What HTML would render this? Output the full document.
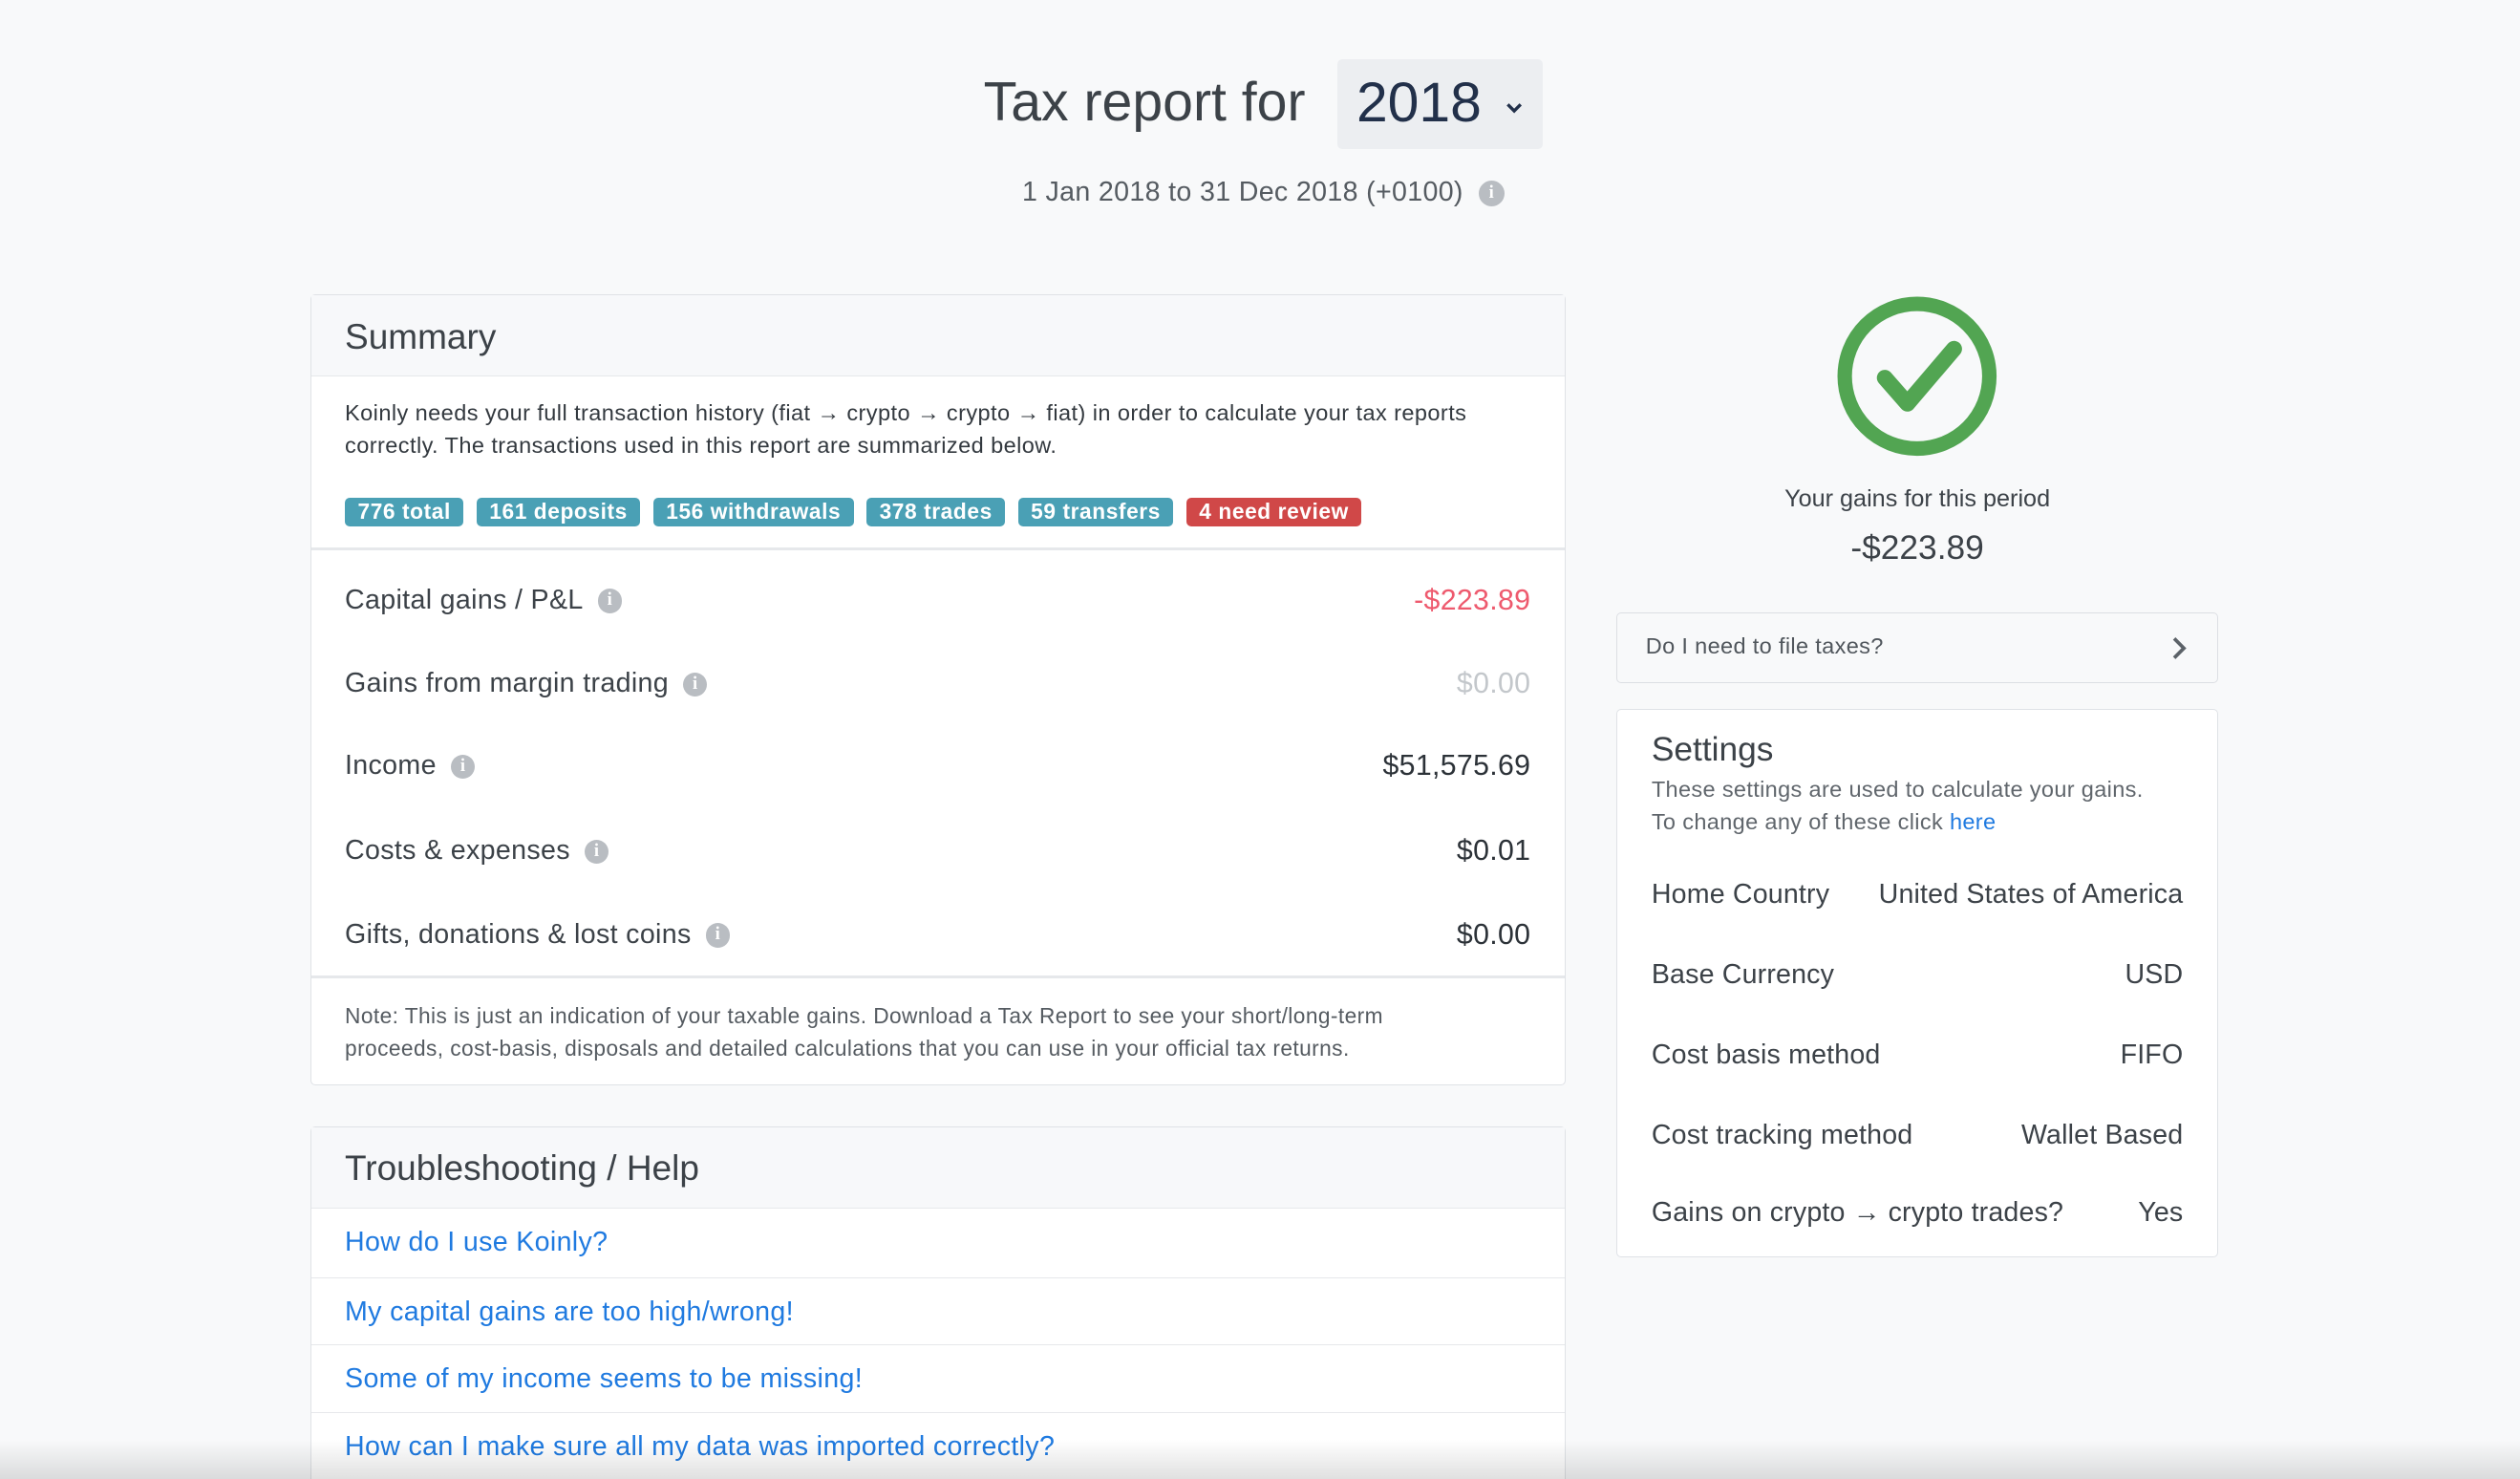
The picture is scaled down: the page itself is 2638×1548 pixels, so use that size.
<!DOCTYPE html>
<html style="overflow:hidden;height:1548px"><head><meta charset="utf-8"><style>
html,body{margin:0;padding:0}
body{width:1568px;height:920px;zoom:1.68240;background:#f8f9fa;font-family:"Liberation Sans",sans-serif;color:#3c4248;position:relative;overflow:hidden}
.a{position:absolute;white-space:nowrap}
.card{position:absolute;background:#fff;border:1px solid #dfe2e6;border-radius:3px;box-sizing:border-box}
.hd{position:absolute;left:0;right:0;top:0;background:#f7f8fa;border-bottom:1px solid #e6e8eb}
.i{display:inline-block;width:15px;height:15px;border-radius:50%;background:#b9bdc2;color:#fff;font-size:11px;font-weight:bold;text-align:center;line-height:15px;font-family:"Liberation Serif",serif;vertical-align:2px;margin-left:9px}
.b{display:inline-block;background:#4aa0b5;color:#fff;font-size:13.5px;font-weight:bold;padding:2px 8px;border-radius:3px;margin-right:8px;line-height:14px;letter-spacing:.35px}
.row{position:absolute;left:21px;right:21px;font-size:17px;letter-spacing:.2px}
.row .v{position:absolute;right:0;top:0}
.lk{position:absolute;left:0;right:0;height:42px;border-top:1px solid #e6e8eb;font-size:17px;color:#1f7ae0;padding-left:21px;line-height:42px;box-sizing:border-box;letter-spacing:.2px}
.sr{position:absolute;left:21px;right:21px;font-size:17px;letter-spacing:.1px}
.sr span{position:absolute;right:0}
</style></head><body>
<div class="a" style="left:612px;top:44px;font-size:34px;color:#3c4248">Tax report for</div>
<div class="a" style="left:832px;top:37px;width:128px;height:56px;background:#eceef1;border-radius:3px"></div>
<div class="a" style="left:844px;top:44px;font-size:35px;color:#22304a">2018</div>
<svg class="a" style="left:936px;top:63px" width="12" height="9" viewBox="0 0 12 9"><path d="M2 2l4 4 4-4" stroke="#22304a" stroke-width="2" fill="none"/></svg>
<div class="a" style="left:636px;top:110px;font-size:17px;color:#555b61;letter-spacing:.2px">1 Jan 2018 to 31 Dec 2018 (+0100)</div>
<div class="a" style="left:911px;top:111px"><span class="i" style="width:16px;height:16px;line-height:16px">i</span></div>

<div class="card" style="left:193px;top:183px;width:781px;height:492px">
 <div class="hd" style="height:50px"></div>
 <div class="a" style="left:21px;top:13px;font-size:22px">Summary</div>
 <div class="a" style="left:21px;top:63px;font-size:14px;line-height:20.5px;white-space:normal;width:730px;color:#33393f;letter-spacing:.25px">Koinly needs your full transaction history (fiat → crypto → crypto → fiat) in order to calculate your tax reports correctly. The transactions used in this report are summarized below.</div>
 <div class="a" style="left:21px;top:125px"><span class="b">776 total</span><span class="b">161 deposits</span><span class="b">156 withdrawals</span><span class="b">378 trades</span><span class="b">59 transfers</span><span class="b" style="background:#d04848">4 need review</span></div>
 <div class="a" style="left:0;right:0;top:157px;border-top:2px solid #e6e8eb"></div>
 <div class="row" style="top:180px">Capital gains / P&amp;L<span class="i">i</span><span class="v" style="color:#ee5a6e;font-size:18px">-$223.89</span></div>
 <div class="row" style="top:232px">Gains from margin trading<span class="i">i</span><span class="v" style="color:#c3c7cb;font-size:18px">$0.00</span></div>
 <div class="row" style="top:283px">Income<span class="i">i</span><span class="v" style="font-size:18px;color:#2c3238">$51,575.69</span></div>
 <div class="row" style="top:336px">Costs &amp; expenses<span class="i">i</span><span class="v" style="font-size:18px;color:#2c3238">$0.01</span></div>
 <div class="row" style="top:388px">Gifts, donations &amp; lost coins<span class="i">i</span><span class="v" style="font-size:18px;color:#2c3238">$0.00</span></div>
 <div class="a" style="left:0;right:0;top:423px;border-top:2px solid #e6e8eb"></div>
 <div class="a" style="left:21px;top:438px;font-size:13.5px;line-height:20.5px;white-space:normal;width:700px;color:#555b61;letter-spacing:.25px">Note: This is just an indication of your taxable gains. Download a Tax Report to see your short/long-term proceeds, cost-basis, disposals and detailed calculations that you can use in your official tax returns.</div>
</div>

<div class="card" style="left:193px;top:701px;width:781px;height:260px">
 <div class="hd" style="height:50px;border-bottom:none"></div>
 <div class="a" style="left:21px;top:12px;font-size:22px">Troubleshooting / Help</div>
 <div class="lk" style="top:50px">How do I use Koinly?</div>
 <div class="lk" style="top:93px">My capital gains are too high/wrong!</div>
 <div class="lk" style="top:135px">Some of my income seems to be missing!</div>
 <div class="lk" style="top:177px">How can I make sure all my data was imported correctly?</div>
</div>
<div class="a" style="left:0;right:0;top:896px;height:24px;background:linear-gradient(rgba(0,0,0,0),rgba(0,0,0,0.12))"></div>

<svg class="a" style="left:1142px;top:183px" width="102" height="102" viewBox="0 0 102 102"><circle cx="51" cy="51" r="45" stroke="#52a552" stroke-width="9" fill="none"/><path d="M31 52l14 16 29-34" stroke="#52a552" stroke-width="10" fill="none" stroke-linecap="round" stroke-linejoin="round"/></svg>
<div class="a" style="left:1006px;width:374px;text-align:center;top:302px;font-size:15px">Your gains for this period</div>
<div class="a" style="left:1006px;width:374px;text-align:center;top:329px;font-size:21px">-$223.89</div>
<div class="card" style="left:1006px;top:381px;width:374px;height:44px;background:#f8f9fa;border-color:#dcdfe3"></div>
<div class="a" style="left:1024px;top:394px;font-size:14px;color:#50565c;letter-spacing:.2px">Do I need to file taxes?</div>
<svg class="a" style="left:1350px;top:395px" width="12" height="16" viewBox="0 0 12 16"><path d="M3 2l6 6-6 6" stroke="#5c6268" stroke-width="2.2" fill="none"/></svg>

<div class="card" style="left:1006px;top:441px;width:374px;height:341px">
 <div class="a" style="left:21px;top:13px;font-size:21px">Settings</div>
 <div class="a" style="left:21px;top:40px;font-size:14px;line-height:20px;color:#60666c;letter-spacing:.2px">These settings are used to calculate your gains.<br>To change any of these click <span style="color:#1f7ae0">here</span></div>
 <div class="sr" style="top:105px">Home Country<span>United States of America</span></div>
 <div class="sr" style="top:155px">Base Currency<span>USD</span></div>
 <div class="sr" style="top:205px">Cost basis method<span>FIFO</span></div>
 <div class="sr" style="top:255px">Cost tracking method<span>Wallet Based</span></div>
 <div class="sr" style="top:303px">Gains on crypto → crypto trades?<span>Yes</span></div>
</div>
</body></html>
